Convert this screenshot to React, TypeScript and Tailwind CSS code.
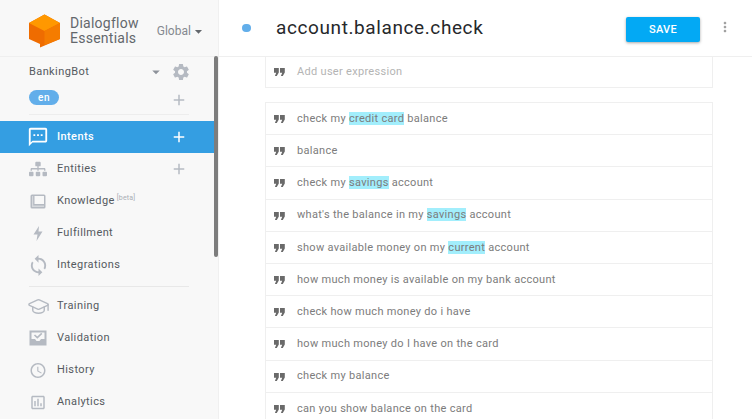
import React from "react";
import { MdOutlineTextsms, MdSync, MdOutlineSchedule, MdOutlineAssessment, MdSettings, MdMoreVert, MdAdd, MdArrowDropDown } from "react-icons/md";
import { FaSitemap } from "react-icons/fa";
import { GraduationCap } from "lucide-react";

const Logo = () => (
  <svg width="33" height="34" viewBox="0 0 33 34">
    <path d="M16.5 0.5 L32 9 V25 L12 33.5 V30 L1 25 V9 Z" fill="#ef6c00" />
    <path d="M16.5 0.5 L32 9 L16.5 17 L1 9 Z" fill="#ff9800" />
    <path d="M16.5 17 L32 9 V25 L16.5 31 Z" fill="#f57c00" />
  </svg>
);

const ValidationIcon = () => (
  <svg width="18" height="16" viewBox="0 0 18 16">
    <path d="M0.5 0.5 H17.5 V15.5 H0.5 Z" fill="#b5bac2" />
    <path d="M2.5 2.5 H15.5 V9 H12 L10.5 11 H7.5 L6 9 H2.5 Z" fill="#f8f8f8" />
    <path d="M5.5 5 L8.3 7.6 L12.8 3.4" fill="none" stroke="#b5bac2" strokeWidth="1.6" />
  </svg>
);

const BookIcon = () => (
  <svg width="16" height="15" viewBox="0 0 16 15">
    <rect x="0.5" y="0.5" width="15" height="14" rx="1.5" fill="#b5bac2" />
    <path d="M4.5 2 H14 V10 H4.5 Z" fill="#f8f8f8" />
    <path d="M2 2 H3.2 V11.5 H14 V13 H2 Z" fill="#d5d8dc" />
  </svg>
);

const BoltIcon = () => (
  <svg width="10" height="15" viewBox="0 0 10 15">
    <path d="M6 0 L0.5 8.5 H4.5 L3.5 15 L9.5 5.5 H5.5 Z" fill="#b5bac2" />
  </svg>
);

const QuoteIcon = () => (
  <svg width="11" height="8" viewBox="0 0 11 8" className="shrink-0">
    <path d="M0 0 H4.8 V4.4 L2.8 8 H0.9 L2.2 4.8 H0 Z M6 0 H10.8 V4.4 L8.8 8 H6.9 L8.2 4.8 H6 Z" fill="#6a6a6a" />
  </svg>
);

type Nav = { label: string; icon: React.ReactNode; plus?: boolean; beta?: boolean };
const iconCls = "text-[#b5bac2]";
const topNav: Nav[] = [
  { label: "Entities", icon: <FaSitemap size={18} className={iconCls} />, plus: true },
  { label: "Knowledge", icon: <BookIcon />, beta: true },
  { label: "Fulfillment", icon: <BoltIcon /> },
  { label: "Integrations", icon: <MdSync size={23} className={`${iconCls} shrink-0`} /> },
];
const bottomNav: Nav[] = [
  { label: "Validation", icon: <ValidationIcon /> },
  { label: "History", icon: <MdOutlineSchedule size={21} className={iconCls} /> },
  { label: "Analytics", icon: <MdOutlineAssessment size={21} className={iconCls} /> },
];

const Plus = ({ white }: { white?: boolean }) => (
  <MdAdd size={18} className={white ? "text-white" : "text-[#b5bac2]"} />
);

const NavRow = ({ n }: { n: Nav }) => (
  <div className="flex h-[32.2px] items-center pl-[29px] pr-[30px]">
    <div className="flex w-[18px] justify-center">{n.icon}</div>
    <span className="ml-[10px] text-[11px] tracking-[0.4px] text-[#555a60]">{n.label}</span>
    {n.beta && <span className="ml-[2px] -translate-y-[3px] text-[7px] tracking-[0.2px] text-[#a9aeb5]">[beta]</span>}
    {n.plus && <span className="ml-auto flex"><Plus /></span>}
  </div>
);

const H = ({ children }: { children: React.ReactNode }) => (
  <span className="bg-[#a2eefc]">{children}</span>
);

const rows: React.ReactNode[] = [
  <>check my <H>credit card</H> balance</>,
  <>balance</>,
  <>check my <H>savings</H> account</>,
  <>what's the balance in my <H>savings</H> account</>,
  <>show available money on my <H>current</H> account</>,
  <>how much money is available on my bank account</>,
  <>check how much money do i have</>,
  <>how much money do I have on the card</>,
  <>check my balance</>,
  <>can you show balance on the card</>,
];

export default function App() {
  return (
    <div className="relative flex h-[419px] w-[752px] overflow-hidden bg-white font-['Roboto',sans-serif]">
      <aside className="relative flex w-[219px] shrink-0 flex-col border-r border-[#f0f0f0] bg-[#f8f8f8]">
        <div className="flex h-[57px] shrink-0 items-center border-b border-[#efefef] pl-[28px] pt-[6px]">
          <Logo />
          <div className="ml-[9px] text-[14px] leading-[15px] tracking-[0.25px] text-[#63676c]">
            Dialogflow<br />Essentials
          </div>
          <span className="ml-[18px] text-[12px] text-[#85898f]">Global</span>
          <MdArrowDropDown size={17} className="-ml-[1px] text-[#63676c]" />
        </div>
        <div className="flex h-[30px] shrink-0 items-center pl-[29px] pr-[28px]">
          <span className="text-[11px] tracking-[0.4px] text-[#555a60]">BankingBot</span>
          <MdArrowDropDown size={18} className="ml-auto text-[#8d929a]" />
          <MdSettings size={20} className="ml-[6px] -mr-[1px] text-[#b5bac2]" />
        </div>
        <div className="mx-[29px] flex h-[28px] shrink-0 items-center justify-between border-b border-[#ededed] pr-[1px]">
          <span className="flex h-[15px] w-[30px] -translate-y-[3px] items-center justify-center rounded-full bg-[#62aeea] text-[10px] font-medium tracking-[0.5px] text-white">en</span>
          <span className="flex -translate-y-[1px]"><Plus /></span>
        </div>
        <div className="mt-[6px] flex h-[32px] shrink-0 items-center bg-[#349ee2] pl-[29px] pr-[30px]">
          <div className="flex w-[18px] justify-center"><MdOutlineTextsms size={22} className="shrink-0 text-white" /></div>
          <span className="ml-[10px] text-[11px] font-medium tracking-[0.4px] text-white">Intents</span>
          <span className="ml-auto flex"><Plus white /></span>
        </div>
        {topNav.map((n) => <NavRow key={n.label} n={n} />)}
        <div className="mx-[29px] mt-[4px] border-t border-[#e8e8e8]" />
        <div className="flex h-[35px] shrink-0 items-center pl-[27px] pt-[4px]">
          <GraduationCap size={23} strokeWidth={1.5} className={iconCls} />
          <span className="ml-[7px] text-[11px] tracking-[0.4px] text-[#555a60]">Training</span>
        </div>
        {bottomNav.map((n) => <NavRow key={n.label} n={n} />)}
        <div className="absolute left-[214px] top-[56px] h-[201px] w-[4px] rounded-full bg-[#7d7d7d]" />
      </aside>
      <main className="flex min-w-0 flex-1 flex-col">
        <header className="flex h-[57px] shrink-0 items-center border-b border-[#efefef] pl-[23px] pr-[19px]">
          <span className="h-[8px] w-[9px] rounded-full bg-[#62aeea]" />
          <h1 className="ml-[25px] text-[19px] tracking-[0.6px] text-[#26282b]">account.balance.check</h1>
          <button className="ml-auto mt-[3px] flex h-[25px] w-[74px] items-center justify-center rounded-[2px] bg-[#03a9f4] pt-[1px] text-[11px] font-medium tracking-[0.3px] text-white shadow-[0_1px_3px_rgba(0,0,0,0.35)]">SAVE</button>
          <MdMoreVert size={16} className="ml-[17px] -translate-y-[1px] text-[#a0a0a0]" />
        </header>
        <div className="ml-[46px] w-[448px]">
          <div className="flex h-[31px] items-center border-x border-b border-[#efefef] pl-[8px]">
            <QuoteIcon />
            <span className="ml-[12px] text-[11px] tracking-[0.3px] text-[#b4b4b4]">Add user expression</span>
          </div>
          <div className="mt-[14px] border-t border-[#efefef]">
            {rows.map((r, i) => (
              <div key={i} className="flex h-[32.2px] items-center border-x border-b border-[#efefef] pl-[8px] pt-[1px]">
                <QuoteIcon />
                <span className="ml-[12px] whitespace-pre-wrap text-[11px] tracking-[0.3px] text-[#7c7c7c]">{r}</span>
              </div>
            ))}
          </div>
        </div>
      </main>
    </div>
  );
}
